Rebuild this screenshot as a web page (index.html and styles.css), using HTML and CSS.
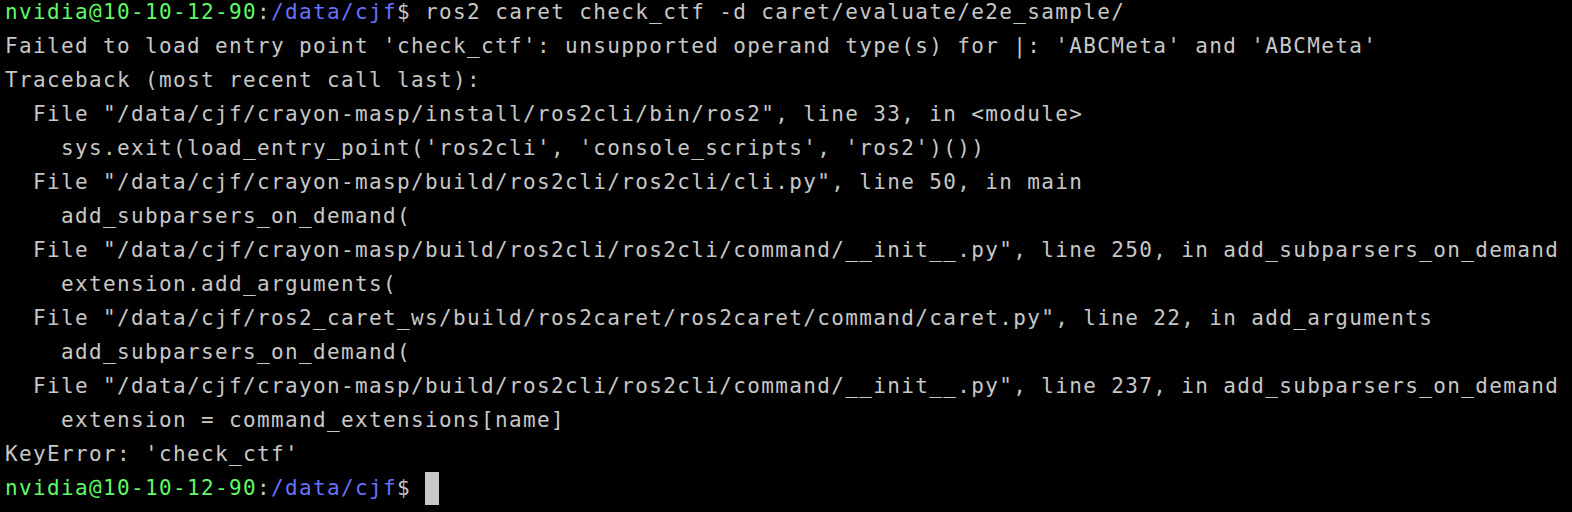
FILE: index.html
```html
<!DOCTYPE html>
<html>
<head>
<meta charset="utf-8">
<link rel="stylesheet" href="styles.css">
</head>
<body>
<div class="term">
<div class="line"><span class="user">nvidia@10-10-12-90</span>:<span class="path">/data/cjf</span>$ ros2 caret check_ctf -d caret/evaluate/e2e_sample/</div>
<div class="line">Failed to load entry point 'check_ctf': unsupported operand type(s) for |: 'ABCMeta' and 'ABCMeta'</div>
<div class="line">Traceback (most recent call last):</div>
<div class="line">  File "/data/cjf/crayon-masp/install/ros2cli/bin/ros2", line 33, in &lt;module&gt;</div>
<div class="line">    sys.exit(load_entry_point('ros2cli', 'console_scripts', 'ros2')())</div>
<div class="line">  File "/data/cjf/crayon-masp/build/ros2cli/ros2cli/cli.py", line 50, in main</div>
<div class="line">    add_subparsers_on_demand(</div>
<div class="line">  File "/data/cjf/crayon-masp/build/ros2cli/ros2cli/command/__init__.py", line 250, in add_subparsers_on_demand</div>
<div class="line">    extension.add_arguments(</div>
<div class="line">  File "/data/cjf/ros2_caret_ws/build/ros2caret/ros2caret/command/caret.py", line 22, in add_arguments</div>
<div class="line">    add_subparsers_on_demand(</div>
<div class="line">  File "/data/cjf/crayon-masp/build/ros2cli/ros2cli/command/__init__.py", line 237, in add_subparsers_on_demand</div>
<div class="line">    extension = command_extensions[name]</div>
<div class="line">KeyError: 'check_ctf'</div>
<div class="line"><span class="user">nvidia@10-10-12-90</span>:<span class="path">/data/cjf</span>$ <span class="cursor"></span></div>
</div>
</body>
</html>
```
FILE: styles.css
```css
html, body {
  margin: 0;
  padding: 0;
  background: #000;
  overflow: hidden;
}
.term {
  margin-top: -5.3px;
  padding-left: 5px;
  font-family: "DejaVu Sans Mono", monospace;
  font-size: 21px;
  letter-spacing: 1.36px;
  line-height: 34px;
  color: #c7c7c7;
}
.line {
  white-space: pre;
  height: 34px;
}
.user {
  color: #5ff967;
}
.path {
  color: #6871ff;
}
.cursor {
  display: inline-block;
  width: 14px;
  height: 34px;
  background: #c7c7c7;
  vertical-align: -11px;
}
```
